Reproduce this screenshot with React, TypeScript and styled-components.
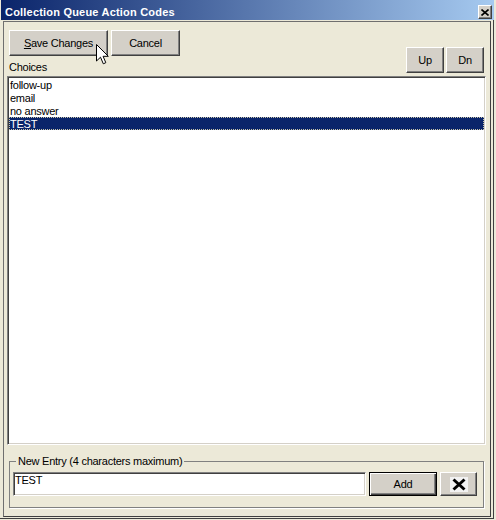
import React from "react";
import styled, { createGlobalStyle } from "styled-components";

const Global = createGlobalStyle`
  html, body { margin: 0; padding: 0; background: #ECE9D8; }
  body { font-family: "Liberation Sans", Arial, sans-serif; font-size: 11px; color: #000; }
  * { box-sizing: border-box; }
`;

const Page = styled.div`
  position: relative;
  width: 496px;
  height: 520px;
  overflow: hidden;
  background: #ece9d8;
`;

const Window = styled.div`
  width: 494px;
  height: 519px;
  display: flex;
  flex-direction: column;
`;

const TitleBar = styled.div`
  height: 20px;
  flex-shrink: 0;
  margin-left: 1px;
  display: flex;
  align-items: flex-start;
  justify-content: space-between;
  padding: 0 2px 0 4px;
  background: linear-gradient(to right, #0a246a, #a6caf0);
`;

const Title = styled.span`
  margin-top: 6px;
  color: #fff;
  font-weight: bold;
  font-size: 11px;
  line-height: 13px;
  letter-spacing: 0.2px;
  white-space: nowrap;
`;

const CloseBox = styled.div`
  margin-top: 5px;
  width: 14px;
  height: 14px;
  background: #d4d0c8;
  border: 1px solid;
  border-color: #fff #404040 #404040 #fff;
  box-shadow: inset -1px -1px 0 #808080;
  display: flex;
  align-items: center;
  justify-content: center;
`;

const Frame = styled.div`
  flex: 1;
  display: flex;
  padding: 1px 2px 1px 3px;
  border-right: 1px solid #404040;
  border-bottom: 1px solid #404040;
`;

const Client = styled.div`
  flex: 1;
  display: flex;
  flex-direction: column;
  border: 1px solid;
  border-color: #6f6f6f #404040 #404040 #6f6f6f;
`;

const Top = styled.div`
  height: 54px;
  flex-shrink: 0;
  display: flex;
  justify-content: space-between;
`;

const LeftCol = styled.div`
  display: flex;
  flex-direction: column;
  padding: 8px 0 0 5px;
`;

const ButtonRow = styled.div`
  display: flex;
  gap: 3px;
`;

const Label = styled.div`
  margin-top: 5px;
  line-height: 13px;
  letter-spacing: -0.25px;
`;

const RightCol = styled.div`
  align-self: flex-end;
  display: flex;
  gap: 2px;
  margin: 0 6px 3px 0;
`;

const Button = styled.div<{ $w: number; $h: number; $default?: boolean }>`
  width: ${(p) => p.$w}px;
  height: ${(p) => p.$h}px;
  flex-shrink: 0;
  display: flex;
  align-items: center;
  justify-content: center;
  padding-top: 1px;
  background: #d4d0c8;
  font-size: 11px;
  letter-spacing: -0.25px;
  line-height: 13px;
  color: #000;
  border: 1px solid;
  border-color: ${(p) => (p.$default ? "#000" : "#fff #404040 #404040 #fff")};
  box-shadow: ${(p) =>
    p.$default
      ? "inset 1px 1px 0 #fff, inset -1px -1px 0 #404040, inset -2px -2px 0 #808080"
      : "inset -1px -1px 0 #808080"};
  white-space: nowrap;
`;

const ListBox = styled.div`
  flex: 1;
  margin: 0 4px 0 3px;
  background: #fff;
  border: 1px solid;
  border-color: #808080 #fff #fff #808080;
  box-shadow: inset 1px 1px 0 #404040, inset -1px -1px 0 #d4d0c8;
  padding: 1px;
  overflow: hidden;
`;

const ListItem = styled.div<{ $selected?: boolean }>`
  height: 13px;
  line-height: 12px;
  padding: 1px 0 0 1px;
  letter-spacing: -0.25px;
  white-space: nowrap;
  background: ${(p) => (p.$selected ? "#0a246a" : "transparent")};
  color: ${(p) => (p.$selected ? "#fff" : "#000")};
  outline: ${(p) => (p.$selected ? "1px dotted #c8c4a8" : "none")};
  outline-offset: -1px;
`;

const Group = styled.fieldset`
  flex-shrink: 0;
  margin: 10px 6px 8px 5px;
  padding: 4px 6px 11px 3px;
  border: 1px solid #808080;
  box-shadow: 1px 1px 0 #fff;
  min-width: 0;
`;

const Legend = styled.legend`
  padding: 0 2px;
  margin-left: 3px;
  line-height: 13px;
  font-size: 11px;
  letter-spacing: -0.25px;
`;

const EntryRow = styled.div`
  display: flex;
  gap: 3px;
  align-items: center;
`;

const TextBox = styled.div`
  width: 353px;
  height: 24px;
  background: #fff;
  border: 1px solid;
  border-color: #808080 #fff #fff #808080;
  box-shadow: inset 1px 1px 0 #404040, inset -1px -1px 0 #d4d0c8;
  padding: 1px 0 0 1px;
  line-height: 13px;
  letter-spacing: -0.25px;
`;

const Cursor = styled.svg`
  position: absolute;
  left: 96px;
  top: 44px;
`;

export default function App() {
  return (
    <Page>
      <Global />
      <Window>
        <TitleBar>
          <Title>Collection Queue Action Codes</Title>
          <CloseBox>
            <svg width="8" height="7" viewBox="0 0 8 7">
              <path d="M0.5 0.5 L7.5 6.5 M7.5 0.5 L0.5 6.5" stroke="#000" strokeWidth="1.6" />
            </svg>
          </CloseBox>
        </TitleBar>
        <Frame>
          <Client>
            <Top>
              <LeftCol>
                <ButtonRow>
                  <Button $w={99} $h={26}>
                    <span>
                      <u>S</u>ave Changes
                    </span>
                  </Button>
                  <Button $w={69} $h={26}>Cancel</Button>
                </ButtonRow>
                <Label>Choices</Label>
              </LeftCol>
              <RightCol>
                <Button $w={38} $h={26}>Up</Button>
                <Button $w={38} $h={26}>Dn</Button>
              </RightCol>
            </Top>
            <ListBox>
              <ListItem>follow-up</ListItem>
              <ListItem>email</ListItem>
              <ListItem>no answer</ListItem>
              <ListItem $selected>TEST</ListItem>
            </ListBox>
            <Group>
              <Legend>New Entry (4 characters maximum)</Legend>
              <EntryRow>
                <TextBox>TEST</TextBox>
                <Button $w={68} $h={24} $default>
                  Add
                </Button>
                <Button $w={37} $h={24}>
                  <svg width="18" height="15" viewBox="0 0 18 15">
                    <rect x="0" y="0" width="18" height="15" fill="#f2f2f2" />
                    <path d="M3.5 2.5 L14.5 12.5 M14.5 2.5 L3.5 12.5" stroke="#000" strokeWidth="3" />
                  </svg>
                </Button>
              </EntryRow>
            </Group>
          </Client>
        </Frame>
      </Window>
      <Cursor width="14" height="22" viewBox="0 0 14 22">
        <path
          d="M0.5 0.5 V17 L4.5 13.2 L7.3 19.8 L9.8 18.7 L7.1 12.3 H12.3 Z"
          fill="#fff"
          stroke="#000"
          strokeWidth="1"
          strokeLinejoin="miter"
        />
      </Cursor>
    </Page>
  );
}
